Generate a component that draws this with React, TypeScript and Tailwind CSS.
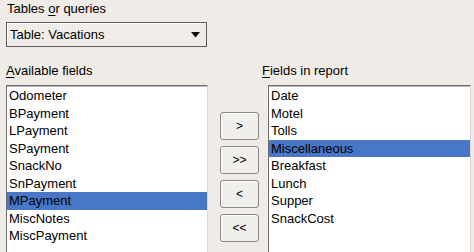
const available = ['Odometer', 'BPayment', 'LPayment', 'SPayment', 'SnackNo', 'SnPayment', 'MPayment', 'MiscNotes', 'MiscPayment']
const inReport = ['Date', 'Motel', 'Tolls', 'Miscellaneous', 'Breakfast', 'Lunch', 'Supper', 'SnackCost']

function ListBox({ items, selected, width }: { items: string[]; selected: string; width: string }) {
  return (
    <div
      className={`${width} h-[190px] shrink-0 border-t border-l border-r border-t-[#6f6f6f] border-l-[#6f6f6f] border-r-[#dcd8d2] bg-white shadow-[inset_0_1px_0_#b8b8b8]`}
    >
      <div className="pt-px">
        {items.map((item) => (
          <div
            key={item}
            className={`h-[17.5px] pl-[2px] leading-[17.5px] ${item === selected ? 'bg-[#4777c6]' : ''}`}
          >
            {item}
          </div>
        ))}
      </div>
    </div>
  )
}

function MoveButton({ label }: { label: string }) {
  return (
    <button className="flex h-[28px] w-[39px] items-center justify-center rounded-[3px] border border-[#8b8782] bg-[#f1efeb] text-[12px] shadow-[inset_1px_1px_0_#ffffff]">
      {label}
    </button>
  )
}

export default function App() {
  return (
    <div className="h-[252px] w-[474px] overflow-hidden bg-[#efebe7] font-['Liberation_Sans',Arial,sans-serif] text-[13px] leading-[18px] text-black">
      <div className="pl-[7px]">
        Tables <span className="underline underline-offset-2">o</span>r queries
      </div>
      <div className="ml-[6px] mt-[4px] flex h-[25px] w-[201px] items-center justify-between border border-[#5f5c58] bg-[#f0ede9] pl-[3px] pr-[6px] shadow-[inset_1px_1px_0_#ffffff]">
        <span>Table: Vacations</span>
        <svg width="9" height="6" viewBox="0 0 9 6">
          <path d="M0 0 H9 L4.5 5.5 Z" fill="#111" />
        </svg>
      </div>
      <div className="mt-[15px] flex">
        <div className="w-[262px] pl-[6px]">
          <span className="underline underline-offset-2">A</span>vailable fields
        </div>
        <div>
          <span className="underline underline-offset-2">F</span>ields in report
        </div>
      </div>
      <div className="mt-[5px] flex pl-[6px]">
        <ListBox items={available} selected="MPayment" width="w-[202px]" />
        <div className="ml-[12px] mt-[27px] flex flex-col gap-[6px]">
          <MoveButton label=">" />
          <MoveButton label=">>" />
          <MoveButton label="<" />
          <MoveButton label="<<" />
        </div>
        <div className="ml-[9px]">
          <ListBox items={inReport} selected="Miscellaneous" width="w-[203px]" />
        </div>
      </div>
    </div>
  )
}
